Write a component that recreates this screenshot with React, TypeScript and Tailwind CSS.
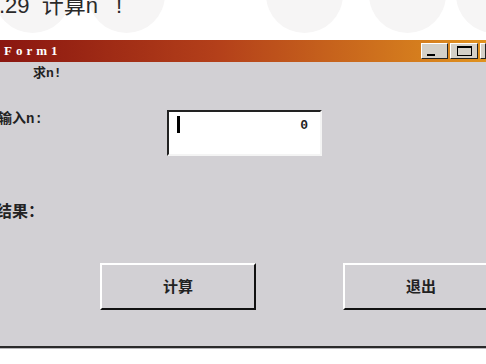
const mono = "font-['Liberation_Mono','Noto_Sans_CJK_SC',monospace]";

const Circle = ({ className }: { className: string }) => (
  <div className={`absolute top-[-44px] h-[77px] w-[77px] rounded-full bg-[#f6f5f5] ${className}`} />
);

const WinButton = ({ label }: { label: string }) => (
  <div className="flex h-[47px] w-[156px] shrink-0 items-center justify-center border-t-2 border-l-2 border-r-2 border-b-2 border-t-white border-l-white border-r-[#111] border-b-[#111] font-['Noto_Sans_CJK_SC',sans-serif] text-[15px] font-bold text-[#222]">
    {label}
  </div>
);

export default function App() {
  return (
    <div className="h-[364px] w-[486px] overflow-hidden bg-white">
      {/* slide header */}
      <div className="relative h-[40px] overflow-hidden bg-white">
        <Circle className="left-[-6px]" />
        <Circle className="left-[88px]" />
        <Circle className="left-[266px]" />
        <Circle className="left-[369px]" />
        <Circle className="left-[456px]" />
        <div className="relative ml-[-1px] mt-[-5px] whitespace-pre font-['Liberation_Sans','Noto_Sans_CJK_SC',sans-serif] text-[22px] leading-[22px] text-[#2a2a2a]">
          .29  计算n<span className="ml-[18px]">!</span>
        </div>
      </div>

      {/* title bar */}
      <div className="flex h-[22px] items-center bg-[linear-gradient(to_right,#8a1610,#b4401a_45%,#e0921f)] pl-[4px]">
        <span className="font-['Liberation_Serif',serif] text-[13px] font-bold tracking-[4px] text-white">Form1</span>
        <div className="ml-auto flex gap-[2px]">
          <div className="relative h-[16px] w-[27px] border border-t-white border-l-white border-r-[#222] border-b-[#222] bg-[#d4d0c8]">
            <div className="absolute left-[5px] top-[10px] h-[2px] w-[8px] bg-black" />
          </div>
          <div className="flex h-[16px] w-[28px] items-center justify-center border border-t-white border-l-white border-r-[#222] border-b-[#222] bg-[#d4d0c8]">
            <div className="h-[10px] w-[15px] border border-t-2 border-black" />
          </div>
          <div className="h-[16px] w-[6px] border border-t-white border-l-white border-r-[#222] border-b-[#222] bg-[#d4d0c8]" />
        </div>
      </div>

      {/* form body */}
      <div className="flex h-[284px] flex-col bg-[#d2d0d4] text-[#222]">
        <div className={`${mono} ml-[33px] mt-[4px] h-[16px] text-[13px] font-bold leading-[16px]`}>
          求n!
        </div>

        <div className="mt-[28px] flex">
          <div className={`${mono} ml-[-2px] w-[169px] text-[14px] font-bold leading-[18px]`}>
            输入n:
          </div>
          <div className="flex h-[46px] w-[155px] justify-between border-2 border-t-[#222] border-l-[#222] border-r-[#f4f4f4] border-b-[#f4f4f4] bg-white pl-[8px] pr-[12px] pt-[3px]">
            <div className="mt-[1px] h-[17px] w-[3px] bg-black" />
            <span className={`${mono} mt-[2px] text-[13px] font-bold leading-[17px]`}>0</span>
          </div>
        </div>

        <div className="ml-[-4px] mt-[45px] h-[18px] font-['Noto_Sans_CJK_SC',sans-serif] text-[16px] font-bold leading-[18px]">
          结果：
        </div>

        <div className="ml-[100px] mt-[44px] flex gap-[87px]">
          <WinButton label="计算" />
          <WinButton label="退出" />
        </div>
      </div>

      {/* bottom edge */}
      <div className="h-[2px] bg-[#2a2a2a]" />
      <div className="h-[1px] bg-[#b8b6ba]" />
    </div>
  );
}
